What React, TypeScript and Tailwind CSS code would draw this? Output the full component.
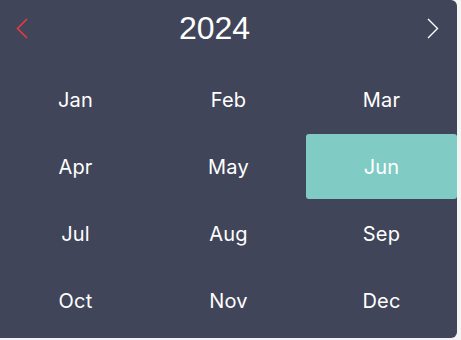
const months = ["Jan","Feb","Mar","Apr","May","Jun","Jul","Aug","Sep","Oct","Nov","Dec"];

export default function App() {
  return (
    <div className="w-[461px] h-[340px] bg-[#f4f4f4] overflow-hidden" style={{ fontFamily: "Inter, 'Noto Sans', sans-serif" }}>
      <div className="w-[457px] h-[338px] bg-[#414559] rounded-r-[6px] flex flex-col">
        <div className="h-[67px] flex items-start justify-between pl-[16px] pr-[18px] pt-[8px]">
          <button className="w-[12px] h-[40px] flex items-center justify-center">
            <svg width="12" height="21" viewBox="0 0 12 21" fill="none">
              <path d="M11 1 L1.5 10.5 L11 20" stroke="#f0383e" strokeWidth="1.5" />
            </svg>
          </button>
          <div
            className="text-white text-[32px] leading-[40px] mr-[26px]"
            style={{ fontFamily: "'Liberation Sans', Arial, sans-serif" }}
          >
            2024
          </div>
          <button className="w-[12px] h-[40px] flex items-center justify-center">
            <svg width="12" height="21" viewBox="0 0 12 21" fill="none">
              <path d="M1 1 L10.5 10.5 L1 20" stroke="#ffffff" strokeWidth="1.4" />
            </svg>
          </button>
        </div>
        <div className="grid grid-cols-3 gap-[2px] grid-rows-[repeat(4,65px)]">
          {months.map((m) => (
            <div
              key={m}
              className={
                "flex items-center justify-center text-[20px] tracking-[0.2px] text-white rounded-[3px] " +
                (m === "Jun" ? "bg-[#80cbc4]" : "")
              }
            >
              {m}
            </div>
          ))}
        </div>
      </div>
    </div>
  );
}
